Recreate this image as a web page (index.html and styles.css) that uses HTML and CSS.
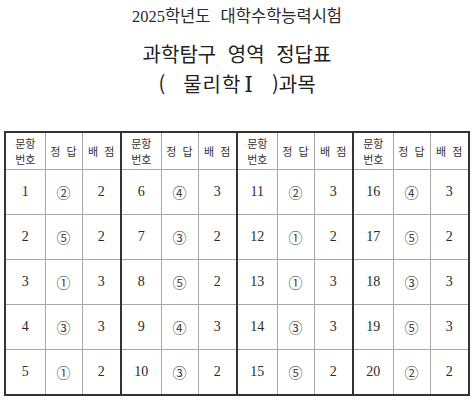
FILE: index.html
```html
<!DOCTYPE html>
<html lang="ko">
<head>
<meta charset="utf-8">
<link rel="stylesheet" href="styles.css">
</head>
<body>
<div class="page">
  <div class="titles">
    <div class="t1">2025학년도 대학수학능력시험</div>
    <div class="t2">과학탐구 영역 정답표</div>
    <div class="t3"><span class="p">(</span><span class="subj">물리학<span class="roman">Ⅰ</span></span><span class="p">)</span>과목</div>
  </div>
  <table class="answers">
    <colgroup>
      <col class="cn"><col class="ca"><col class="cs">
      <col class="cn"><col class="ca"><col class="cs">
      <col class="cn"><col class="ca"><col class="cs">
      <col class="cn"><col class="ca"><col class="cs">
    </colgroup>
    <thead>
      <tr>
        <th class="g">문항<br>번호</th><th>정 답</th><th>배 점</th>
        <th class="g">문항<br>번호</th><th>정 답</th><th>배 점</th>
        <th class="g">문항<br>번호</th><th>정 답</th><th>배 점</th>
        <th class="g">문항<br>번호</th><th>정 답</th><th>배 점</th>
      </tr>
    </thead>
    <tbody>
      <tr>
        <td class="g">1</td><td class="c">②</td><td>2</td>
        <td class="g">6</td><td class="c">④</td><td>3</td>
        <td class="g">11</td><td class="c">②</td><td>3</td>
        <td class="g">16</td><td class="c">④</td><td>3</td>
      </tr>
      <tr>
        <td class="g">2</td><td class="c">⑤</td><td>2</td>
        <td class="g">7</td><td class="c">③</td><td>2</td>
        <td class="g">12</td><td class="c">①</td><td>2</td>
        <td class="g">17</td><td class="c">⑤</td><td>2</td>
      </tr>
      <tr>
        <td class="g">3</td><td class="c">①</td><td>3</td>
        <td class="g">8</td><td class="c">⑤</td><td>2</td>
        <td class="g">13</td><td class="c">①</td><td>3</td>
        <td class="g">18</td><td class="c">③</td><td>3</td>
      </tr>
      <tr>
        <td class="g">4</td><td class="c">③</td><td>3</td>
        <td class="g">9</td><td class="c">④</td><td>3</td>
        <td class="g">14</td><td class="c">③</td><td>3</td>
        <td class="g">19</td><td class="c">⑤</td><td>3</td>
      </tr>
      <tr>
        <td class="g">5</td><td class="c">①</td><td>2</td>
        <td class="g">10</td><td class="c">③</td><td>2</td>
        <td class="g">15</td><td class="c">⑤</td><td>2</td>
        <td class="g">20</td><td class="c">②</td><td>2</td>
      </tr>
    </tbody>
  </table>
</div>
</body>
</html>
```

FILE: styles.css
```css
html, body {
  margin: 0;
  padding: 0;
  background: #fff;
}
body {
  width: 474px;
  height: 401px;
  overflow: hidden;
  font-family: "Liberation Serif", "Noto Sans CJK KR", serif;
  color: #2a2a2a;
}
.page {
  padding: 5px 4px 0 4px;
}
.titles {
  text-align: center;
  height: 126px;
}
.t1 {
  font-size: 16.5px;
  line-height: 22px;
  word-spacing: 6px;
  padding-top: 1px;
}
.t2 {
  font-size: 20px;
  line-height: 28px;
  margin-top: 12px;
  font-family: "Noto Sans CJK KR", sans-serif;
  font-weight: 400;
  word-spacing: 6px;
  color: #222;
}
.t3 {
  font-size: 20px;
  line-height: 28px;
  margin-top: 2px;
  font-family: "Noto Sans CJK KR", sans-serif;
  font-weight: 400;
  color: #222;
}
.t3 .subj {
  margin: 0 18px 0 18px;
  letter-spacing: 1px;
}
.t3 .roman {
  font-family: "DejaVu Serif", serif;
  font-size: 22px;
  line-height: 20px;
  margin-left: 3px;
}
.answers {
  border-collapse: collapse;
  table-layout: fixed;
  width: 466px;
  border: 2px solid #333;
}
.cn { width: 40px; }
.ca { width: 37px; }
.cs { width: 39px; }
.answers th, .answers td {
  border: 1px solid #a8a8a8;
  text-align: center;
  padding: 0;
  font-weight: 400;
}
.answers th {
  height: 36px;
  font-family: "Noto Sans CJK KR", sans-serif;
  font-size: 11px;
  line-height: 16px;
  color: #333;
  word-spacing: 3px;
}
.answers td {
  height: 44px;
  font-size: 14px;
  line-height: 16px;
}
.answers .g {
  border-left: 2px solid #333;
}
.answers td.c {
  font-family: "Noto Sans CJK KR", sans-serif;
  font-size: 14px;
  color: #444;
}
```
